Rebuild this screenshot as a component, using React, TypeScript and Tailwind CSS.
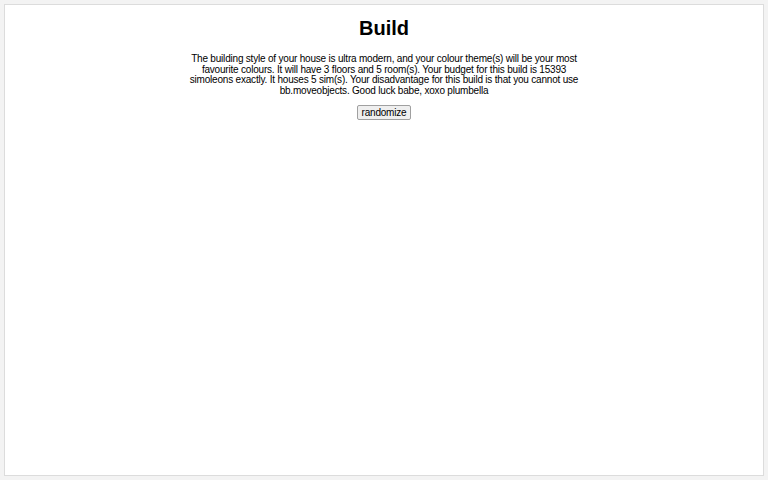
export default function App() {
  return (
    <div className="h-[480px] w-[768px] bg-[#f3f3f3] p-[4px]" style={{ fontFamily: '"Liberation Sans", Arial, sans-serif' }}>
      <div className="flex h-full flex-col items-center border border-[#dcdcdc] bg-white">
        <h1 className="mt-[11px] text-[20px] font-bold leading-[24px] text-black">Build</h1>
        <p className="mt-[14px] w-[392px] text-center text-[10px] leading-[10.7px] tracking-[-0.2px] text-black">
          The building style of your house is ultra modern, and your colour theme(s) will be your most favourite colours. It will have 3 floors and 5 room(s). Your budget for this build is 15393 simoleons exactly. It houses 5 sim(s). Your disadvantage for this build is that you cannot use bb.moveobjects. Good luck babe, xoxo plumbella
        </p>
        <button className="mt-[8px] rounded-[2px] border border-[#a0a0a0] bg-[#efefef] px-[4px] py-[1px] text-[10px] leading-[11px] tracking-[-0.2px] text-black">
          randomize
        </button>
      </div>
    </div>
  );
}
